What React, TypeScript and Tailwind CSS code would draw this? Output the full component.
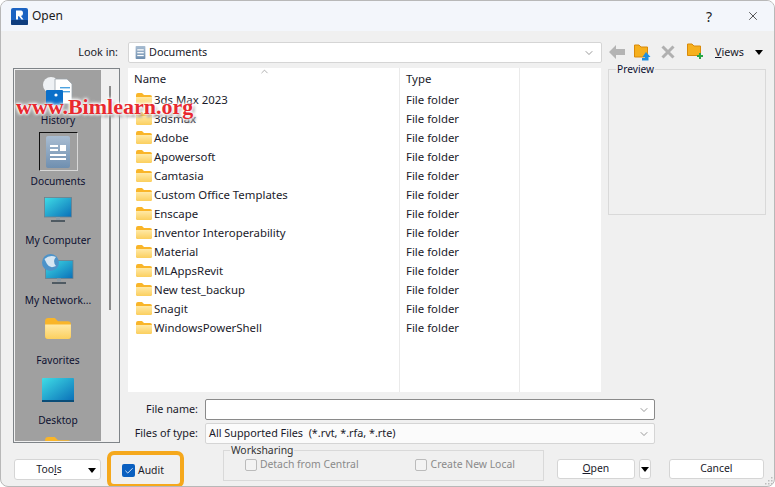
import React from 'react'
import { ChevronDown, X, Check } from 'lucide-react'

const font = "[font-family:'Noto_Sans',sans-serif]"

const folders = [
    '3ds Max 2023',
    '3dsmax',
    'Adobe',
    'Apowersoft',
    'Camtasia',
    'Custom Office Templates',
    'Enscape',
    'Inventor Interoperability',
    'Material',
    'MLAppsRevit',
    'New test_backup',
    'Snagit',
    'WindowsPowerShell',
]

function FolderIcon({ w = 16, h = 13 }: { w?: number; h?: number }) {
    return (
        <svg width={w} height={h} viewBox="0 0 16 13" className="shrink-0">
            <path d="M0 2 Q0 0 2 0 H6 L8 2 H14 Q16 2 16 4 V11 Q16 13 14 13 H2 Q0 13 0 11 Z" fill="#f9b529" />
            <path d="M0 4 H16 V11 Q16 13 14 13 H2 Q0 13 0 11 Z" fill="url(#folderFill)" />
        </svg>
    )
}

function DocIcon({ w, h }: { w: number; h: number }) {
    return (
        <svg width={w} height={h} viewBox="0 0 24 32" className="shrink-0" preserveAspectRatio="none">
            <rect x="0" y="0" width="24" height="32" rx="2" fill="url(#docFill)" />
            <rect x="4" y="9" width="8" height="2" fill="#fff" />
            <rect x="4" y="13" width="8" height="2" fill="#fff" />
            <rect x="14" y="9" width="6" height="6" fill="#fff" />
            <rect x="4" y="18" width="16" height="2" fill="#fff" />
            <rect x="4" y="22" width="16" height="2" fill="#fff" />
        </svg>
    )
}

function Monitor() {
    return (
        <svg width="28" height="26" viewBox="0 0 28 26" className="mb-[9px]">
            <rect x="0.5" y="0.5" width="27" height="19.5" fill="url(#screenFill)" stroke="#6e7f8c" strokeWidth="0.8" />
            <rect x="12" y="20" width="4" height="3" fill="#8d9ba5" />
            <rect x="7" y="23" width="14" height="2" fill="#4f5a62" />
        </svg>
    )
}

function NetworkMonitor() {
    return (
        <svg width="32" height="32" viewBox="0 0 32 32" className="mb-[7px]">
            <rect x="3.5" y="7.5" width="27.5" height="18" fill="url(#screenFill)" stroke="#6e7f8c" strokeWidth="0.8" />
            <rect x="15" y="25.5" width="4" height="3" fill="#8d9ba5" />
            <rect x="10" y="29" width="14" height="2" fill="#4f5a62" />
            <circle cx="8.5" cy="9.5" r="8.5" fill="#4d93c9" />
            <path d="M2.5 6 Q8 1 14 4 Q10 8 14 13 Q8 16 5 11 Z" fill="#d6e6f2" />
        </svg>
    )
}

function SidebarItem({ icon, label, h }: { icon: React.ReactNode; label: string; h: number }) {
    return (
        <div className="flex flex-col items-center justify-end shrink-0" style={{ height: h }}>
            <div className="flex-1 flex items-end justify-center">{icon}</div>
            <span className="text-[10.2px] leading-[16px] text-[#0d1030] whitespace-nowrap">{label}</span>
        </div>
    )
}

function Sidebar() {
    return (
        <div className="w-[107px] h-[375px] border border-[#7f8488] flex bg-[#f0f0f0] shrink-0">
            <div className="w-[86px] ml-px my-px bg-[#a0a0a0] overflow-hidden flex flex-col pt-[2px]">
                <SidebarItem
                    h={56}
                    label="History"
                    icon={
                        <svg width="30" height="36" viewBox="0 0 30 36">
                            <circle cx="8" cy="9" r="8" fill="#eef1f4" />
                            <path d="M12 3 H24 L29 8 V28 H12 Z" fill="#fff" stroke="#9aa3ab" strokeWidth="0.8" />
                            <rect x="17" y="11" width="10" height="1.4" fill="#4da3e0" />
                            <rect x="17" y="15" width="10" height="1.4" fill="#4da3e0" />
                            <rect x="3" y="14" width="17" height="15" rx="1" fill="#0a6fc9" />
                            <circle cx="13" cy="19" r="1.6" fill="#fff" />
                        </svg>
                    }
                />
                <div className="flex flex-col items-center h-[64px] shrink-0">
                    <div className="mt-[4px] w-[39px] h-[39px] border border-[#111] border-r-[#d8d8d8] border-b-[#d8d8d8] flex items-center justify-center overflow-hidden">
                        <DocIcon w={24} h={32} />
                    </div>
                    <span className="mt-[2px] text-[10.2px] leading-[16px] text-[#0d1030]">Documents</span>
                </div>
                <SidebarItem h={56} label="My Computer" icon={<Monitor />} />
                <SidebarItem h={60} label="My Network..." icon={<NetworkMonitor />} />
                <SidebarItem
                    h={60}
                    label="Favorites"
                    icon={
                        <div className="mb-[13px]">
                            <FolderIcon w={28} h={21} />
                        </div>
                    }
                />
                <SidebarItem
                    h={60}
                    label="Desktop"
                    icon={
                        <svg width="32" height="24" viewBox="0 0 32 24" className="mb-[10px]">
                            <rect x="0" y="0" width="32" height="23" rx="1" fill="url(#screenFill)" />
                            <rect x="0" y="22" width="32" height="2" fill="#0a4d78" />
                        </svg>
                    }
                />
                <div className="flex justify-center pt-[9px]">
                    <FolderIcon w={28} h={21} />
                </div>
            </div>
            <div className="flex-1 flex justify-center pt-[17px]">
                <div className="w-[2px] h-[224px] bg-[#8c8c8c]" />
            </div>
        </div>
    )
}

function FileList() {
    return (
        <div className="w-[473px] h-[324px] bg-white flex text-[11.4px] leading-[19px] text-[#1a1a2a] relative">
            <div className="w-[272px] border-r border-[#eaeaea]">
                <div className="h-[21px] flex items-center pl-[6px] relative">
                    <span>Name</span>
                    <ChevronDown size={11} strokeWidth={1} className="absolute left-[131px] top-[-2px] rotate-180 text-[#555]" />
                </div>
                <div className="mt-[1px]">
                    {folders.map((name) => (
                        <div key={name} className="h-[19px] flex items-center gap-[2px] pl-[8px]">
                            <FolderIcon />
                            <span className="whitespace-nowrap">{name}</span>
                        </div>
                    ))}
                </div>
            </div>
            <div className="w-[120px] border-r border-[#eaeaea]">
                <div className="h-[21px] flex items-center pl-[6px]">Type</div>
                <div className="mt-[1px]">
                    {folders.map((name) => (
                        <div key={name} className="h-[19px] flex items-center pl-[6px]">
                            File folder
                        </div>
                    ))}
                </div>
            </div>
        </div>
    )
}

function Toolbar() {
    return (
        <div className="flex items-center w-[160px] h-[20px]">
            <svg width="16" height="14" viewBox="0 0 16 14" className="ml-[1px]">
                <path d="M0 7 L7 0 V4 H16 V10 H7 V14 Z" fill="#b4b4b4" />
            </svg>
            <svg width="17" height="17" viewBox="0 0 17 17" className="ml-[9px]">
                <path d="M0.5 1 H5 L7 3 H13.5 V13 H0.5 Z" fill="#f6b01e" stroke="#d98a0a" />
                <path d="M12 8 L16.5 13 H14.5 V16.5 H8 V14 H11 V13 H8.5 Z" fill="#1e8fe1" />
            </svg>
            <svg width="14" height="14" viewBox="0 0 14 14" className="ml-[10px]">
                <path d="M1.5 1.5 L12.5 12.5 M12.5 1.5 L1.5 12.5" stroke="#b0b0b0" strokeWidth="3" />
            </svg>
            <svg width="17" height="17" viewBox="0 0 17 17" className="ml-[12px] mt-[-2px]">
                <path d="M0.5 1 H5 L7 3 H13.5 V12.5 H0.5 Z" fill="#f6b01e" stroke="#d98a0a" />
                <path d="M10 12 H12 V10 H14 V12 H16 V14 H14 V16 H12 V14 H10 Z" fill="#28a745" />
            </svg>
            <span className="ml-[11px] text-[10.8px] text-[#1a1a2a]">
                <u>V</u>iews
            </span>
            <span className="ml-[11px] w-0 h-0 border-x-[4px] border-x-transparent border-t-[5px] border-t-black" />
        </div>
    )
}

export default function App() {
    return (
        <div className={`${font} relative w-[775px] h-[487px] overflow-hidden bg-[#f0f0f0] rounded-[8px] border border-[#b8b8b8] flex flex-col`}>
            <svg width="0" height="0" className="absolute">
                <defs>
                    <linearGradient id="folderFill" x1="0" y1="0" x2="0" y2="1">
                        <stop offset="0" stopColor="#ffe9a6" />
                        <stop offset="1" stopColor="#fbcf5e" />
                    </linearGradient>
                    <linearGradient id="docFill" x1="0" y1="0" x2="0" y2="1">
                        <stop offset="0" stopColor="#a9bdd2" />
                        <stop offset="1" stopColor="#6f8fb0" />
                    </linearGradient>
                    <linearGradient id="screenFill" x1="0" y1="0" x2="1" y2="1">
                        <stop offset="0" stopColor="#3fdde6" />
                        <stop offset="1" stopColor="#0a6fb8" />
                    </linearGradient>
                </defs>
            </svg>

            {/* Title bar */}
            <div className="h-[30px] bg-[#f3f6fb] flex items-center shrink-0 pl-[10px]">
                <svg width="17" height="17" viewBox="0 0 17 17">
                    <rect width="17" height="17" rx="2" fill="#1b63c2" />
                    <rect y="12" width="17" height="5" rx="1" fill="#0f3d7d" />
                    <path d="M5 2.5 H10 Q12 2.5 12 5.5 Q12 7.5 10 8 L12.5 11.5 H10.5 L8 8.2 H7 V11.5 H5 Z" fill="#fff" />
                </svg>
                <span className="ml-[4px] text-[12px] text-[#1a1a1a]">Open</span>
                <span className="ml-auto text-[14px] text-[#222]">?</span>
                <X size={14} strokeWidth={1.3} className="ml-[34px] mr-[14px] text-[#222]" />
            </div>

            {/* Body */}
            <div className="flex-1 flex flex-col text-[10.8px] pl-[12px]">
                <div className="flex pt-[11px] h-[37px] shrink-0">
                    <div className="w-[105px] text-right leading-[20px] text-[#1a1a2a]">Look in:</div>
                    <div className="ml-[10px] w-[474px] h-[21px] bg-white border border-[#d5d5d5] rounded-[2px] flex items-center pl-[6px] pr-[6px]">
                        <svg width="11" height="13" viewBox="0 0 24 32" className="shrink-0">
                            <rect width="24" height="32" rx="2" fill="url(#docFill)" />
                            <rect x="4" y="8" width="16" height="3" fill="#fff" />
                            <rect x="4" y="15" width="16" height="3" fill="#fff" />
                            <rect x="4" y="22" width="16" height="3" fill="#fff" />
                        </svg>
                        <span className="ml-[3px] text-[#1a1a2a]">Documents</span>
                        <ChevronDown size={12} strokeWidth={1.2} className="ml-auto text-[#555]" />
                    </div>
                    <div className="ml-[6px]">
                        <Toolbar />
                    </div>
                </div>

                <div className="flex">
                    <Sidebar />
                    <div className="ml-[8px] flex flex-col">
                        <div className="flex">
                            <FileList />
                            <fieldset className="ml-[7px] w-[158px] h-[152px] border border-[#d9d9d9] mt-[-5px] pl-[7px]">
                                <legend className="px-[1px] text-[10.2px] leading-[12px] text-[#0d1030]">Preview</legend>
                            </fieldset>
                        </div>
                        <div className="mt-[7px] flex items-center h-[21px]">
                            <div className="w-[70px] text-right text-[#1a1a2a]">File name:</div>
                            <div className="ml-[7px] w-[450px] h-[21px] bg-white border border-[#8a8a8a] rounded-[2px] flex items-center justify-end pr-[4px]">
                                <ChevronDown size={12} strokeWidth={1.2} className="text-[#555]" />
                            </div>
                        </div>
                        <div className="mt-[3px] flex items-center h-[21px]">
                            <div className="w-[70px] text-right whitespace-nowrap text-[#1a1a2a]">Files of type:</div>
                            <div className="ml-[7px] w-[450px] h-[21px] bg-[#fbfbfb] border border-[#d5d5d5] rounded-[2px] flex items-center pl-[3px] pr-[4px]">
                                <span className="text-[#1a1a2a] whitespace-pre">All Supported Files  (*.rvt, *.rfa, *.rte)</span>
                                <ChevronDown size={12} strokeWidth={1.2} className="ml-auto text-[#555]" />
                            </div>
                        </div>
                    </div>
                </div>

                {/* Bottom row */}
                <div className="flex items-start mt-[7px] text-[10.4px]">
                    <div className="mt-[8px] ml-[1px] w-[87px] h-[21px] bg-white border border-[#d5d5d5] rounded-[3px] flex items-center relative">
                        <span className="w-[68px] text-center text-[#1a1a2a]">
                            Too<u>l</u>s
                        </span>
                        <span className="absolute right-[4px] top-[8px] w-0 h-0 border-x-[4px] border-x-transparent border-t-[5px] border-t-black" />
                    </div>
                    <div className="ml-[21px] mt-[9px] h-[21px] flex items-center gap-[3px]">
                        <span className="w-[13px] h-[13px] bg-[#0a5fc0] rounded-[2px] flex items-center justify-center">
                            <Check size={10} strokeWidth={2} className="text-white" />
                        </span>
                        <span className="text-[#1a1a2a]">Audit</span>
                    </div>
                    <fieldset className="w-[321px] ml-[59px] mt-[-7px] h-[37px] border border-[#d9d9d9] pl-[6px] flex">
                        <legend className="px-[1px] text-[10.4px] leading-[12px] text-[#333]">Worksharing</legend>
                        <div className="flex items-center text-[#8a8a8a] h-[18px] pl-[15px]">
                            <span className="w-[12px] h-[12px] border border-[#bbb] rounded-[2px] bg-[#f3f3f3]" />
                            <span className="ml-[3px]">Detach from Central</span>
                            <span className="ml-[56px] w-[12px] h-[12px] border border-[#bbb] rounded-[2px] bg-[#f3f3f3]" />
                            <span className="ml-[4px]">Create New Local</span>
                        </div>
                    </fieldset>
                    <div className="ml-[13px] mt-[8px] w-[78px] h-[20px] bg-white border border-[#d5d5d5] rounded-[3px] flex items-center justify-center text-[#1a1a2a]">
                        <span>
                            <u>O</u>pen
                        </span>
                    </div>
                    <div className="ml-[4px] mt-[8px] w-[12px] h-[20px] bg-white border border-[#d5d5d5] rounded-[3px] flex items-center justify-center">
                        <span className="w-0 h-0 border-x-[4px] border-x-transparent border-t-[5px] border-t-black" />
                    </div>
                    <div className="ml-[18px] mt-[8px] w-[95px] h-[20px] bg-white border border-[#d5d5d5] rounded-[3px] flex items-center justify-center text-[#1a1a2a]">
                        Cancel
                    </div>
                </div>
            </div>

            {/* Resize grip */}
            <svg width="9" height="9" viewBox="0 0 9 9" className="absolute right-[1px] bottom-[1px]">
                <g fill="#bdbdbd">
                    <rect x="7" y="1" width="1.5" height="1.5" />
                    <rect x="4" y="4" width="1.5" height="1.5" />
                    <rect x="7" y="4" width="1.5" height="1.5" />
                    <rect x="1" y="7" width="1.5" height="1.5" />
                    <rect x="4" y="7" width="1.5" height="1.5" />
                    <rect x="7" y="7" width="1.5" height="1.5" />
                </g>
            </svg>

            {/* Annotation + watermark overlays */}
            <div className="absolute left-[106px] top-[450px] w-[77px] h-[37px] border-[4px] border-[#f5a81c] rounded-[7px]" />
            <div className="absolute left-[15px] top-[94px] text-[22px] leading-[24px] font-bold text-[#e8292f] whitespace-nowrap [font-family:'Liberation_Serif',serif] [text-shadow:0_0_2px_#fff,0_0_3px_#fff,0_0_4px_#fff,0_0_4px_#fff,2px_3px_3px_#888]">
                www.Bimlearn.org
            </div>
        </div>
    )
}
